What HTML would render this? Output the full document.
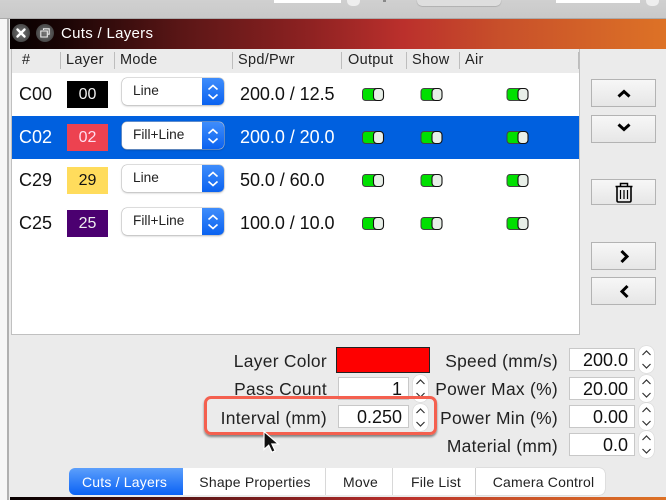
<!DOCTYPE html>
<html><head><meta charset="utf-8"><style>
html,body{margin:0;padding:0}
body{width:666px;height:500px;overflow:hidden;position:relative;background:#ebebeb;font-family:"Liberation Sans",sans-serif;color:#111}
div,span,svg{position:absolute}
.t{white-space:nowrap;line-height:20px}
.h{font-size:14.5px;top:50px;color:#222;letter-spacing:.3px}
.sep{width:1px;height:17px;top:52px;background:#bdbdbd}
.row{left:12px;width:567px;height:43px}
.c{left:19px;font-size:18px;color:#111}
.v{left:240px;font-size:18px;color:#111;letter-spacing:-.05px}
.sw{left:67px;width:41px;height:27px;text-align:center;line-height:27px;font-size:16px}
.sel{left:122px;width:102px;height:27px;border-radius:5px;background:#fff;box-shadow:0 0 0 .5px #bbb,0 1px 2px rgba(0,0,0,.25)}
.sel b{position:absolute;left:11px;top:0;font-weight:normal;font-size:13.7px;line-height:25px;color:#222}
.sel i{position:absolute;right:0;top:0;width:22px;height:100%;background:linear-gradient(#3f8dfb,#0a62f0);border-radius:0 5px 5px 0}
.sel svg{left:80px;top:3px}
.btn{left:591px;width:63px;background:linear-gradient(#f7f7f7,#e6e6e6);border:1px solid #b3b3b3}
.lb{font-size:17.4px;text-align:right;color:#222;letter-spacing:.3px}
.f{background:#fff;border:1px solid #c8c8c8;text-align:right;font-size:18px;line-height:22px;color:#111;box-sizing:border-box;padding-right:6px}
.sp{width:15px;height:27px;background:#fff;border-radius:7px;box-shadow:0 0 1px #aaa}
.tab{top:468px;height:27px;line-height:29px;font-size:14px;text-align:center;color:#222;background:#fff;box-sizing:border-box;border-right:1px solid #d8d8d8;letter-spacing:.2px}
</style></head><body>
<!-- top strip -->
<div style="left:0;top:0;width:666px;height:18px;background:linear-gradient(#d0d0d0,#c9c9c9);border-bottom:1px solid #aaa"></div>
<div style="left:274px;top:0;width:67px;height:3px;background:#fff"></div>
<div style="left:347px;top:0;width:13px;height:6px;background:#eee;border-radius:0 0 5px 5px"></div>
<div style="left:417px;top:0;width:84px;height:6px;background:#dedede;border-radius:0 0 5px 5px;box-shadow:0 .5px 1px #999"></div>
<div style="left:556px;top:0;width:84px;height:3px;background:#fff"></div>
<div style="left:646px;top:0;width:13px;height:6px;background:#eee;border-radius:0 0 5px 5px"></div>
<div style="left:383px;top:0;width:3px;height:2px;background:#888"></div>
<!-- left strip -->
<div style="left:0;top:19px;width:7px;height:481px;background:#f6f6f6"></div>
<div style="left:7px;top:19px;width:2px;height:481px;background:#b0b0b0"></div>
<!-- title -->
<div style="left:10px;top:19px;width:656px;height:30px;background:linear-gradient(90deg,#070000 0,#1a0505 8%,#5a1616 26%,#8f2222 46%,#bb302c 60%,#c8502a 75%,#dd7226 100%)"></div>
<div style="left:12px;top:24px;width:18px;height:18px;border-radius:9px;background:radial-gradient(#777,#333)"></div>
<svg style="left:12px;top:24px" width="18" height="18"><path d="M5.500 5.500l7 7M12.500 5.500l-7 7" stroke="#fff" stroke-width="2.400" stroke-linecap="round"/></svg>
<div style="left:36px;top:24px;width:18px;height:18px;border-radius:9px;background:radial-gradient(#777,#333)"></div>
<svg style="left:36px;top:24px" width="18" height="18"><path d="M7.500 6V4.800h5.700v5.400H12M4.800 7h6.500v6H4.800z" fill="none" stroke="#eee" stroke-width="1.100"/></svg>
<div class="t" style="left:61px;top:24px;font-size:15px;color:#fff;letter-spacing:.3px">Cuts / Layers</div>
<!-- table -->
<div style="left:11px;top:49px;width:569px;height:286px;background:#fff;box-sizing:border-box;border:1px solid #c0c0c0;border-top:0"></div>
<div style="left:12px;top:49px;width:567px;height:24px;background:#ebebeb"></div>
<div class="t h" style="left:22px">#</div><div class="sep" style="left:60px"></div>
<div class="t h" style="left:66px">Layer</div><div class="sep" style="left:114px"></div>
<div class="t h" style="left:120px">Mode</div><div class="sep" style="left:232px"></div>
<div class="t h" style="left:238px">Spd/Pwr</div><div class="sep" style="left:341px"></div>
<div class="t h" style="left:348px">Output</div><div class="sep" style="left:406px"></div>
<div class="t h" style="left:412px">Show</div><div class="sep" style="left:459px"></div>
<div class="t h" style="left:465px">Air</div><div class="sep" style="left:578px"></div>
<div class="row" style="top:116px;background:#0060df"></div>
<!-- rows -->
<div class="t c" style="top:84px">C00</div>
<div class="t c" style="top:127px;color:#fff">C02</div>
<div class="t c" style="top:170px">C29</div>
<div class="t c" style="top:213px">C25</div>
<div class="sw" style="top:81px;background:#000;color:#eee">00</div>
<div class="sw" style="top:124px;background:#ed4250;color:#fde">02</div>
<div class="sw" style="top:167px;background:#ffdc5c;color:#111">29</div>
<div class="sw" style="top:210px;background:#4b0070;color:#eee">25</div>
<div class="sel" style="top:78px"><b>Line</b><i></i><svg width="22" height="20"><path d="M6.500 8.500l4.500-4 4.500 4M6.500 13.500l4.500 4 4.500-4" fill="none" stroke="#fff" stroke-width="1.600"/></svg></div>
<div class="sel" style="top:122px"><b>Fill+Line</b><i></i><svg width="22" height="20"><path d="M6.500 8.500l4.500-4 4.500 4M6.500 13.500l4.500 4 4.500-4" fill="none" stroke="#fff" stroke-width="1.600"/></svg></div>
<div class="sel" style="top:165px"><b>Line</b><i></i><svg width="22" height="20"><path d="M6.500 8.500l4.500-4 4.500 4M6.500 13.500l4.500 4 4.500-4" fill="none" stroke="#fff" stroke-width="1.600"/></svg></div>
<div class="sel" style="top:208px"><b>Fill+Line</b><i></i><svg width="22" height="20"><path d="M6.500 8.500l4.500-4 4.500 4M6.500 13.500l4.500 4 4.500-4" fill="none" stroke="#fff" stroke-width="1.600"/></svg></div>
<div class="t v" style="top:84px">200.0 / 12.5</div>
<div class="t v" style="top:127px;color:#fff">200.0 / 20.0</div>
<div class="t v" style="top:170px">50.0 / 60.0</div>
<div class="t v" style="top:213px">100.0 / 10.0</div>
<!-- toggles -->
<svg width="666" height="500" style="left:0;top:0">
<defs><g id="tg"><rect x=".5" y=".5" width="16" height="12" rx="3" fill="#00e000" stroke="#444"/><rect x="11.500" y=".5" width="10" height="12" rx="3.500" fill="#e8efe8" stroke="#111" stroke-width="1.100"/></g></defs>
<use href="#tg" x="362" y="88"/><use href="#tg" x="420.500" y="88"/><use href="#tg" x="506.500" y="88"/>
<use href="#tg" x="362" y="131"/><use href="#tg" x="420.500" y="131"/><use href="#tg" x="506.500" y="131"/>
<use href="#tg" x="362" y="174"/><use href="#tg" x="420.500" y="174"/><use href="#tg" x="506.500" y="174"/>
<use href="#tg" x="362" y="217"/><use href="#tg" x="420.500" y="217"/><use href="#tg" x="506.500" y="217"/>
</svg>
<!-- right buttons -->
<div class="btn" style="top:79px;height:26px"></div>
<div class="btn" style="top:115px;height:26px"></div>
<div class="btn" style="top:179px;height:24px"></div>
<div class="btn" style="top:242px;height:26px"></div>
<div class="btn" style="top:277px;height:26px"></div>
<svg width="666" height="500" style="left:0;top:0" fill="none" stroke="#000">
<path d="M618.500 96.500l5.500-5 5.500 5" stroke-width="3"/>
<path d="M618.500 124.500l5.500 5 5.500-5" stroke-width="3"/>
<path d="M621.500 251l5.500 5.500-5.500 5.500" stroke-width="3"/>
<path d="M627.500 286l-5.500 5.500 5.500 5.500" stroke-width="3"/>
<path d="M615.500 186.500h17M620.500 186v-2.500h7v2.500" stroke-width="1.500"/>
<path d="M617 187v13.500q0 1.500 1.500 1.500h11q1.500 0 1.500-1.500V187" stroke-width="1.600"/>
<path d="M620.500 190v9M624 190v9M627.500 190v9" stroke-width="1.200"/>
</svg>
<!-- bottom labels -->
<div class="t lb" style="left:200px;width:127px;top:351px">Layer Color</div>
<div style="left:336px;top:347px;width:94px;height:26px;background:#fe0000;border:1px solid #222;box-sizing:border-box"></div>
<div class="t lb" style="left:200px;width:127px;top:379px">Pass Count</div>
<div class="f" style="left:338px;top:377px;width:71px;height:23px">1</div>
<div class="sp" style="left:413px;top:375px"></div>
<div class="t lb" style="left:200px;width:127px;top:408px">Interval (mm)</div>
<div class="f" style="left:338px;top:405px;width:71px;height:23px">0.250</div>
<div class="sp" style="left:413px;top:404px"></div>
<div class="t lb" style="left:430px;width:128px;top:351px">Speed (mm/s)</div>
<div class="t lb" style="left:430px;width:128px;top:379px">Power Max (%)</div>
<div class="t lb" style="left:430px;width:128px;top:408px">Power Min (%)</div>
<div class="t lb" style="left:430px;width:128px;top:436px">Material (mm)</div>
<div class="f" style="left:569px;top:348px;width:66px;height:23px">200.0</div>
<div class="f" style="left:569px;top:377px;width:66px;height:23px">20.00</div>
<div class="f" style="left:569px;top:405px;width:66px;height:23px">0.00</div>
<div class="f" style="left:569px;top:433px;width:66px;height:23px">0.0</div>
<div class="sp" style="left:639px;top:346px"></div>
<div class="sp" style="left:639px;top:375px"></div>
<div class="sp" style="left:639px;top:403px"></div>
<div class="sp" style="left:639px;top:431px"></div>
<svg width="666" height="500" style="left:0;top:0" fill="none" stroke="#333" stroke-width="1.200">
<path d="M416.500 384l4-4 4 4M416.500 393l4 4 4-4"/>
<path d="M416.500 413l4-4 4 4M416.500 422l4 4 4-4"/>
<path d="M642.500 355l4-4 4 4M642.500 364l4 4 4-4"/>
<path d="M642.500 384l4-4 4 4M642.500 393l4 4 4-4"/>
<path d="M642.500 412l4-4 4 4M642.500 421l4 4 4-4"/>
<path d="M642.500 440l4-4 4 4M642.500 449l4 4 4-4"/>
</svg>
<!-- highlight -->
<div style="left:204px;top:396px;width:233px;height:39px;box-sizing:border-box;border:3px solid #f4604f;border-radius:7px;box-shadow:0 2px 2px rgba(0,0,0,.45)"></div>
<!-- cursor -->
<svg width="24" height="28" style="left:258px;top:428px"><path d="M6 3.500v18l4.700-4.200 3.200 7 3.200-1.500-3.200-6.800h6.600z" fill="#111" stroke="#fff" stroke-width="1.200"/></svg>
<!-- tabs -->
<div class="tab" style="left:69px;width:114px;border:0;border-radius:6px 0 0 6px;background:linear-gradient(#5c9ffb,#0a62f5);color:#fff;padding-right:3px">Cuts / Layers</div>
<div class="tab" style="left:183px;width:143px;padding-left:2px">Shape Properties</div>
<div class="tab" style="left:326px;width:67px;padding-left:3px">Move</div>
<div class="tab" style="left:393px;width:83px;padding-left:4px">File List</div>
<div class="tab" style="left:476px;width:129px;border:0;border-radius:0 6px 6px 0;box-shadow:0 0 1px #999;padding-left:6px">Camera Control</div>
<!-- bottom strip -->
<div style="left:10px;top:497px;width:656px;height:3px;background:linear-gradient(90deg,#070000 0,#1a0505 8%,#5a1616 26%,#8f2222 46%,#bb302c 60%,#c8502a 75%,#dd7226 100%)"></div>
</body></html>
